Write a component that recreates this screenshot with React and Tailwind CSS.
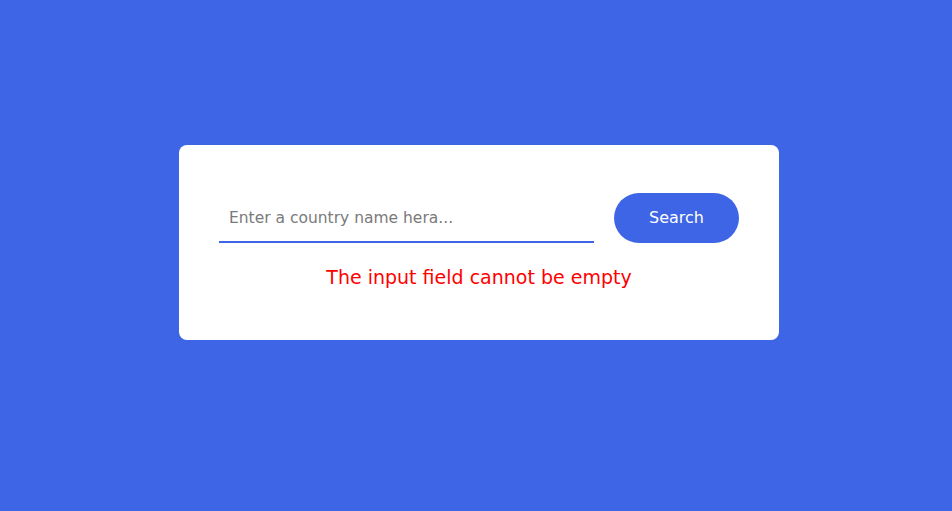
import { useState } from "react";

export default function App() {
  const [query, setQuery] = useState("");

  return (
    <div
      className="min-h-screen w-full bg-[#3d65e6] flex items-center justify-center pl-[6px] pb-[26px]"
      style={{ fontFamily: "'DejaVu Sans', 'Noto Sans', sans-serif" }}
    >
      <div className="w-[600px] h-[195px] bg-white rounded-lg px-10 pt-12">
        <form
          onSubmit={(e) => e.preventDefault()}
          className="flex items-center gap-5"
        >
          <input
            value={query}
            onChange={(e) => setQuery(e.target.value)}
            placeholder="Enter a country name hera..."
            className="w-[375px] h-[50px] px-2.5 pt-[2px] text-[15.5px] text-gray-700 placeholder:text-[#7a7a7a] border-b-2 border-[#3d65e6] outline-none"
          />
          <button
            type="submit"
            className="w-[125px] h-[50px] rounded-full bg-[#3d65e6] text-white text-[16px] font-medium"
          >
            Search
          </button>
        </form>
        <p className="mt-[20px] text-center text-[19px] text-[#ff0000]">
          The input field cannot be empty
        </p>
      </div>
    </div>
  );
}
